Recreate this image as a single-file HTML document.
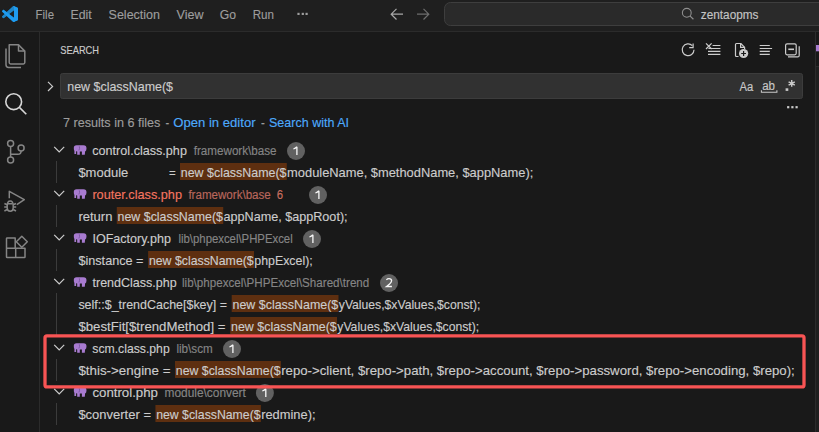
<!DOCTYPE html>
<html><head><meta charset="utf-8"><style>
html,body{margin:0;padding:0;background:#191919;width:819px;height:432px;overflow:hidden}
svg{display:block}
text{font-family:"Liberation Sans", sans-serif;white-space:pre}
</style></head><body>
<svg width="819" height="432" viewBox="0 0 819 432" xml:space="preserve">
<rect x="0" y="0" width="819" height="432" fill="#191919" rx="0" />
<rect x="0" y="0" width="819" height="31" fill="#1f1f1f" rx="0" />
<rect x="0" y="31" width="819" height="1" fill="#2b2b2b" rx="0" />
<rect x="39" y="32" width="1" height="400" fill="#2b2b2b" rx="0" />
<rect x="815" y="32" width="1" height="400" fill="#2b2b2b" rx="0" />
<rect x="816" y="32" width="3" height="400" fill="#1f1f1f" rx="0" />
<rect x="816" y="32" width="3" height="34" fill="#181818" rx="0" />
<rect x="816" y="66" width="3" height="1" fill="#2b2b2b" rx="0" />
<rect x="816" y="45" width="3" height="6.3" fill="#a87bd0" rx="0" />
<g transform="translate(2,6) scale(0.16)">
<path fill="#0065a9" d="M96.5 10.8 75.9 0.9c-2.4-1.2-5.2-.7-7.1 1.2L29.4 38 12.2 25c-1.6-1.2-3.8-1.1-5.3.2L1.4 30.2c-1.8 1.7-1.8 4.5 0 6.2L16.3 50 1.4 63.6c-1.8 1.7-1.8 4.5 0 6.2l5.5 5c1.5 1.3 3.7 1.4 5.3.2L29.4 62l39.4 35.9c1.9 1.9 4.7 2.4 7.1 1.2l20.6-9.9c2.2-1 3.5-3.2 3.5-5.6V16.4c0-2.4-1.4-4.6-3.5-5.6zM75 72.7 45.1 50 75 27.3v45.4z"/>
<path fill="#2489ca" d="M96.5 10.8 75.9.9c-2.4-1.2-5.2-.7-7.1 1.2L1.4 63.6c-1.8 1.7-1.8 4.5 0 6.2l5.5 5c1.5 1.3 3.7 1.4 5.3.2L93.5 13.2c2.7-2.1 6.5-.1 6.5 3.2v-.2c0-2.4-1.4-4.6-3.5-5.4z" opacity="0.9"/>
<path fill="#1f9cf0" d="M75.9 99.1c-2.4 1.2-5.2.7-7.1-1.2L1.4 36.4c-1.8-1.7-1.8-4.5 0-6.2l5.5-5c1.5-1.3 3.7-1.4 5.3-.2l81.3 61.8c2.7 2.1 6.5.1 6.5-3.2v.2c0 2.4-1.4 4.6-3.5 5.6z"/>
<path fill="#1f9cf0" d="M75.9 99.1c-2.4 1.2-5.2.7-7.1-1.2 2.2 2.2 6 .6 6-2.5V4.6c0-3.1-3.8-4.7-6-2.5 1.9-1.9 4.7-2.4 7.1-1.2l20.6 9.9c2.2 1 3.5 3.2 3.5 5.6v67.2c0 2.4-1.4 4.6-3.5 5.6z"/>
</g>
<text x="35.60" y="19" font-size="13.5" fill="#9d9d9d" textLength="18.40" lengthAdjust="spacingAndGlyphs" font-weight="normal" stroke="#9d9d9d" stroke-width="0.15">File</text>
<text x="70.50" y="19" font-size="13.5" fill="#9d9d9d" textLength="21.20" lengthAdjust="spacingAndGlyphs" font-weight="normal" stroke="#9d9d9d" stroke-width="0.15">Edit</text>
<text x="108.60" y="19" font-size="13.5" fill="#9d9d9d" textLength="51.40" lengthAdjust="spacingAndGlyphs" font-weight="normal" stroke="#9d9d9d" stroke-width="0.15">Selection</text>
<text x="176.50" y="19" font-size="13.5" fill="#9d9d9d" textLength="27.00" lengthAdjust="spacingAndGlyphs" font-weight="normal" stroke="#9d9d9d" stroke-width="0.15">View</text>
<text x="219.70" y="19" font-size="13.5" fill="#9d9d9d" textLength="16.30" lengthAdjust="spacingAndGlyphs" font-weight="normal" stroke="#9d9d9d" stroke-width="0.15">Go</text>
<text x="252.70" y="19" font-size="13.5" fill="#9d9d9d" textLength="21.30" lengthAdjust="spacingAndGlyphs" font-weight="normal" stroke="#9d9d9d" stroke-width="0.15">Run</text>
<rect x="297.4" y="12.8" width="2.2" height="2.2" fill="#9d9d9d" rx="0" />
<rect x="301.7" y="12.8" width="2.2" height="2.2" fill="#9d9d9d" rx="0" />
<rect x="305.5" y="12.8" width="2.2" height="2.2" fill="#9d9d9d" rx="0" />
<path d="M403 14.2H391.2M396.5 8.9L391.2 14.2L396.5 19.5" stroke="#a8a8a8" stroke-width="1.2" fill="none"/>
<path d="M417 14.2H428.8M423.5 8.9L428.8 14.2L423.5 19.5" stroke="#6e6e6e" stroke-width="1.2" fill="none"/>
<rect x="444.5" y="2.5" width="400" height="23" rx="6" fill="#2a2a2a" stroke="#3e3e3e" stroke-width="1"/>
<circle cx="686.8" cy="12.8" r="4.4" stroke="#8f8f8f" stroke-width="1.1" fill="none"/><path d="M689.9 15.9L693.4 19.2" stroke="#8f8f8f" stroke-width="1.2"/>
<text x="700.80" y="19" font-size="12.5" fill="#c4c4c4" textLength="57.70" lengthAdjust="spacingAndGlyphs" font-weight="normal" stroke="#c4c4c4" stroke-width="0.15">zentaopms</text>
<g stroke="#858585" stroke-width="1.5" fill="none" stroke-linejoin="round"><path d="M9.2 44.8H18.5L24.8 51.1V62.6Q24.8 64 23.4 64H10.6Q9.2 64 9.2 62.6Z"/><path d="M18.5 44.8V51.1H24.8"/><path d="M6 48.5V64.8Q6 67.5 8.7 67.5H21"/></g>
<g stroke="#d7d7d7" stroke-width="1.6" fill="none"><circle cx="13.7" cy="101.7" r="7.9"/><path d="M19.4 107.4L26.3 114.3"/></g>
<g stroke="#858585" stroke-width="1.5" fill="none"><circle cx="10.6" cy="143.4" r="3"/><circle cx="10.6" cy="160.1" r="3"/><circle cx="21.1" cy="148" r="3"/><path d="M10.6 146.4V157.1"/><path d="M21.1 151Q21.1 154.3 17.8 154.3H10.6"/></g>
<g stroke="#858585" stroke-width="1.5" fill="none" stroke-linejoin="round"><path d="M9.3 198.2V191.3L24.3 199.6L16.8 204.6"/><path d="M7.2 206Q7.2 201 10.2 201Q13.2 201 13.2 206V208Q13.2 211.2 10.2 211.2Q7.2 211.2 7.2 208Z"/><path d="M4.4 203.5L7.2 204.8M16 203.5L13.2 204.8M4.2 207L7.2 207M16.2 207L13.2 207M4.4 211L7.2 209.5M16 211L13.2 209.5M8 203.8H12.4"/></g>
<g stroke="#858585" stroke-width="1.5" fill="none" stroke-linejoin="round"><path d="M6.5 248.3V238.6Q6.5 238 7.1 238H15.2V248.3M6.5 248.3H25V257Q25 257.6 24.4 257.6H7.1Q6.5 257.6 6.5 257Z"/><path d="M15.7 248.3V257.6"/><path d="M21.8 236.2L27.3 241.7L21.8 247.2L16.3 241.7Z"/></g>
<text x="60.30" y="54" font-size="11" fill="#cccccc" textLength="38.70" lengthAdjust="spacingAndGlyphs" font-weight="normal" stroke="#cccccc" stroke-width="0.15">SEARCH</text>
<g stroke="#cccccc" stroke-width="1.2" fill="none"><path d="M692.3 45.6A5.9 5.9 0 1 0 694 49.8"/><path d="M693.1 43.6V47.6H689.2"/></g>
<g stroke="#cccccc" stroke-width="1.2" fill="none"><path d="M706 43.4L711.6 49M711.6 43.4L706 49"/><path d="M712.6 45.5H720.4M708.4 48.5H720.4M708 51.4H720.4M708 54.4H720.4"/></g>
<g stroke="#cccccc" stroke-width="1.2" fill="none" stroke-linejoin="round"><path d="M738.5 56.5H736.4Q735.5 56.5 735.5 55.6V44.4Q735.5 43.5 736.4 43.5H740.8L744.6 47.3V49"/><path d="M740.6 43.6V47.4H744.5"/></g><circle cx="743.6" cy="53.5" r="4.6" fill="#cccccc"/><path d="M743.6 51.1V55.9M741.2 53.5H746" stroke="#191919" stroke-width="1.2"/>
<g stroke="#cccccc" stroke-width="1.1" fill="none"><path d="M759.7 45.5H769.8M759.7 48.5H772.1M759.7 51.4H769.8M759.7 54.4H769.8"/></g>
<g stroke="#cccccc" stroke-width="1.2" fill="none"><rect x="785.6" y="43.8" width="10.6" height="11" rx="1.5"/><path d="M799.2 46.2V55.4Q799.2 56.9 797.7 56.9H788"/></g><path d="M788.3 49.3H794" stroke="#cccccc" stroke-width="1.6"/>
<path d="M48 81.8L52.6 86.4L48 91" stroke="#cccccc" stroke-width="1.2" fill="none"/>
<rect x="60.5" y="73.5" width="742" height="25" fill="#313131" rx="2" stroke="#3c3c3c" stroke-width="1"/>
<text x="67.30" y="90.9" font-size="13.5" fill="#cccccc" textLength="105.70" lengthAdjust="spacingAndGlyphs" font-weight="normal" stroke="#cccccc" stroke-width="0.15">new $className($</text>
<text x="739.50" y="90.8" font-size="12.5" fill="#c8c8c8" textLength="13.70" lengthAdjust="spacingAndGlyphs" font-weight="normal" stroke="#c8c8c8" stroke-width="0.15">Aa</text>
<text x="762.20" y="89.9" font-size="12.5" fill="#c8c8c8" textLength="12.80" lengthAdjust="spacingAndGlyphs" font-weight="normal" stroke="#c8c8c8" stroke-width="0.15">ab</text>
<path d="M761.4 90.2V92.2H776.9V90.2" stroke="#c8c8c8" stroke-width="1.1" fill="none"/>
<rect x="785.6" y="88.3" width="2.7" height="2.6" fill="#c8c8c8" rx="0" />
<g stroke="#c8c8c8" stroke-width="1.5"><path d="M791.7 80.1V86.8M788.6 81.8L794.8 85.1M794.8 81.8L788.6 85.1"/></g><circle cx="791.7" cy="83.45" r="1.6" fill="#c8c8c8"/>
<rect x="787.1" y="106.1" width="2.2" height="2.2" fill="#cccccc" rx="0" />
<rect x="791.3" y="106.1" width="2.2" height="2.2" fill="#cccccc" rx="0" />
<rect x="795.5" y="106.1" width="2.2" height="2.2" fill="#cccccc" rx="0" />
<text x="63.00" y="126.5" font-size="13.5" fill="#9d9d9d" textLength="97.40" lengthAdjust="spacingAndGlyphs" font-weight="normal" stroke="#9d9d9d" stroke-width="0.15">7 results in 6 files</text>
<text x="165.50" y="126.5" font-size="13.5" fill="#9d9d9d" textLength="3.70" lengthAdjust="spacingAndGlyphs" font-weight="normal" stroke="#9d9d9d" stroke-width="0.15">-</text>
<text x="173.20" y="126.5" font-size="13.5" fill="#4daafc" textLength="82.40" lengthAdjust="spacingAndGlyphs" font-weight="normal" stroke="#4daafc" stroke-width="0.15">Open in editor</text>
<text x="261.00" y="126.5" font-size="13.5" fill="#9d9d9d" textLength="3.80" lengthAdjust="spacingAndGlyphs" font-weight="normal" stroke="#9d9d9d" stroke-width="0.15">-</text>
<text x="269.00" y="126.5" font-size="13.5" fill="#4daafc" textLength="80.00" lengthAdjust="spacingAndGlyphs" font-weight="normal" stroke="#4daafc" stroke-width="0.15">Search with AI</text>
<path d="M54.2 146.8L59.2 152L64.2 146.8" stroke="#cccccc" stroke-width="1.2" fill="none"/>
<g transform="translate(73.5,145.1)"><path fill="#a87bd0" d="M0.3 3Q0.3 0.3 3 0.2L10 0.2Q13 0.3 13 3.3Q13 5.6 11.6 6.3L11.3 9.7L8.4 9.7L8.4 6.5L6.3 6.5L6.3 9.7L3.7 9.7L3.7 6.5L2.6 6.2L2.6 9L0.9 9L0.9 6Q0.3 5 0.3 3Z"/><path d="M5.8 1.2Q6.6 3.2 5.4 5.4" stroke="#74519a" stroke-width="0.8" fill="none"/></g>
<text x="92.30" y="155" font-size="13.5" fill="#cccccc" textLength="94.60" lengthAdjust="spacingAndGlyphs" font-weight="normal" stroke="#cccccc" stroke-width="0.15">control.class.php</text>
<text x="193.70" y="155" font-size="12" fill="#858585" textLength="82.90" lengthAdjust="spacingAndGlyphs" font-weight="normal" stroke="#858585" stroke-width="0.15">framework\base</text>
<circle cx="296" cy="151" r="9" fill="#616161"/>
<path d="M296.9 146.8V155M296.9 146.8Q295.4 148.4 293.4 149" stroke="#f8f8f8" stroke-width="1.3" fill="none"/>
<path d="M54.2 190.8L59.2 196L64.2 190.8" stroke="#cccccc" stroke-width="1.2" fill="none"/>
<g transform="translate(73.5,189.1)"><path fill="#a87bd0" d="M0.3 3Q0.3 0.3 3 0.2L10 0.2Q13 0.3 13 3.3Q13 5.6 11.6 6.3L11.3 9.7L8.4 9.7L8.4 6.5L6.3 6.5L6.3 9.7L3.7 9.7L3.7 6.5L2.6 6.2L2.6 9L0.9 9L0.9 6Q0.3 5 0.3 3Z"/><path d="M5.8 1.2Q6.6 3.2 5.4 5.4" stroke="#74519a" stroke-width="0.8" fill="none"/></g>
<text x="92.40" y="199" font-size="13.5" fill="#f47560" textLength="89.60" lengthAdjust="spacingAndGlyphs" font-weight="normal" stroke="#f47560" stroke-width="0.15">router.class.php</text>
<text x="188.40" y="199" font-size="12" fill="#b9675c" textLength="82.40" lengthAdjust="spacingAndGlyphs" font-weight="normal" stroke="#b9675c" stroke-width="0.15">framework\base</text>
<circle cx="318" cy="195" r="9" fill="#616161"/>
<path d="M318.9 190.8V199M318.9 190.8Q317.4 192.4 315.4 193" stroke="#f8f8f8" stroke-width="1.3" fill="none"/>
<path d="M54.2 234.8L59.2 240L64.2 234.8" stroke="#cccccc" stroke-width="1.2" fill="none"/>
<g transform="translate(73.5,233.1)"><path fill="#a87bd0" d="M0.3 3Q0.3 0.3 3 0.2L10 0.2Q13 0.3 13 3.3Q13 5.6 11.6 6.3L11.3 9.7L8.4 9.7L8.4 6.5L6.3 6.5L6.3 9.7L3.7 9.7L3.7 6.5L2.6 6.2L2.6 9L0.9 9L0.9 6Q0.3 5 0.3 3Z"/><path d="M5.8 1.2Q6.6 3.2 5.4 5.4" stroke="#74519a" stroke-width="0.8" fill="none"/></g>
<text x="92.40" y="243" font-size="13.5" fill="#cccccc" textLength="78.60" lengthAdjust="spacingAndGlyphs" font-weight="normal" stroke="#cccccc" stroke-width="0.15">IOFactory.php</text>
<text x="178.50" y="243" font-size="12" fill="#858585" textLength="114.20" lengthAdjust="spacingAndGlyphs" font-weight="normal" stroke="#858585" stroke-width="0.15">lib\phpexcel\PHPExcel</text>
<circle cx="312" cy="239" r="9" fill="#616161"/>
<path d="M312.9 234.8V243M312.9 234.8Q311.4 236.4 309.4 237" stroke="#f8f8f8" stroke-width="1.3" fill="none"/>
<path d="M54.2 278.8L59.2 284L64.2 278.8" stroke="#cccccc" stroke-width="1.2" fill="none"/>
<g transform="translate(73.5,277.1)"><path fill="#a87bd0" d="M0.3 3Q0.3 0.3 3 0.2L10 0.2Q13 0.3 13 3.3Q13 5.6 11.6 6.3L11.3 9.7L8.4 9.7L8.4 6.5L6.3 6.5L6.3 9.7L3.7 9.7L3.7 6.5L2.6 6.2L2.6 9L0.9 9L0.9 6Q0.3 5 0.3 3Z"/><path d="M5.8 1.2Q6.6 3.2 5.4 5.4" stroke="#74519a" stroke-width="0.8" fill="none"/></g>
<text x="92.50" y="287" font-size="13.5" fill="#cccccc" textLength="84.20" lengthAdjust="spacingAndGlyphs" font-weight="normal" stroke="#cccccc" stroke-width="0.15">trendClass.php</text>
<text x="182.00" y="287" font-size="12" fill="#858585" textLength="187.30" lengthAdjust="spacingAndGlyphs" font-weight="normal" stroke="#858585" stroke-width="0.15">lib\phpexcel\PHPExcel\Shared\trend</text>
<circle cx="389" cy="283" r="9" fill="#616161"/>
<path d="M386.4 279.8Q387.4 278.6 389 278.6Q391.6 278.6 391.6 280.8Q391.6 282.4 389.6 283.9L386.4 286.5H391.9" stroke="#f8f8f8" stroke-width="1.3" fill="none"/>
<path d="M54.2 344.8L59.2 350L64.2 344.8" stroke="#cccccc" stroke-width="1.2" fill="none"/>
<g transform="translate(73.5,343.1)"><path fill="#a87bd0" d="M0.3 3Q0.3 0.3 3 0.2L10 0.2Q13 0.3 13 3.3Q13 5.6 11.6 6.3L11.3 9.7L8.4 9.7L8.4 6.5L6.3 6.5L6.3 9.7L3.7 9.7L3.7 6.5L2.6 6.2L2.6 9L0.9 9L0.9 6Q0.3 5 0.3 3Z"/><path d="M5.8 1.2Q6.6 3.2 5.4 5.4" stroke="#74519a" stroke-width="0.8" fill="none"/></g>
<text x="92.30" y="353" font-size="13.5" fill="#cccccc" textLength="77.40" lengthAdjust="spacingAndGlyphs" font-weight="normal" stroke="#cccccc" stroke-width="0.15">scm.class.php</text>
<text x="176.40" y="353" font-size="12" fill="#858585" textLength="36.30" lengthAdjust="spacingAndGlyphs" font-weight="normal" stroke="#858585" stroke-width="0.15">lib\scm</text>
<circle cx="232" cy="349" r="9" fill="#616161"/>
<path d="M232.9 344.8V353M232.9 344.8Q231.4 346.4 229.4 347" stroke="#f8f8f8" stroke-width="1.3" fill="none"/>
<path d="M54.2 388.8L59.2 394L64.2 388.8" stroke="#cccccc" stroke-width="1.2" fill="none"/>
<g transform="translate(73.5,387.1)"><path fill="#a87bd0" d="M0.3 3Q0.3 0.3 3 0.2L10 0.2Q13 0.3 13 3.3Q13 5.6 11.6 6.3L11.3 9.7L8.4 9.7L8.4 6.5L6.3 6.5L6.3 9.7L3.7 9.7L3.7 6.5L2.6 6.2L2.6 9L0.9 9L0.9 6Q0.3 5 0.3 3Z"/><path d="M5.8 1.2Q6.6 3.2 5.4 5.4" stroke="#74519a" stroke-width="0.8" fill="none"/></g>
<text x="92.40" y="397" font-size="13.5" fill="#cccccc" textLength="65.60" lengthAdjust="spacingAndGlyphs" font-weight="normal" stroke="#cccccc" stroke-width="0.15">control.php</text>
<text x="164.50" y="397" font-size="12" fill="#858585" textLength="81.40" lengthAdjust="spacingAndGlyphs" font-weight="normal" stroke="#858585" stroke-width="0.15">module\convert</text>
<circle cx="264.9" cy="393" r="9" fill="#616161"/>
<path d="M265.79999999999995 388.8V397M265.79999999999995 388.8Q264.29999999999995 390.4 262.29999999999995 391" stroke="#f8f8f8" stroke-width="1.3" fill="none"/>
<text x="276.70" y="199" font-size="12.5" fill="#c96f60" textLength="6.30" lengthAdjust="spacingAndGlyphs" font-weight="normal" stroke="#c96f60" stroke-width="0.15">6</text>
<rect x="56" y="161" width="1" height="22" fill="#3b3b3b" rx="0" />
<rect x="180" y="163" width="106.80000000000001" height="17" fill="#5e2f10" rx="0" />
<text x="78.40" y="177" font-size="13.5" fill="#cccccc" textLength="49.90" lengthAdjust="spacingAndGlyphs" font-weight="normal" stroke="#cccccc" stroke-width="0.15">$module</text>
<text x="180.80" y="177" font-size="13.5" fill="#cccccc" textLength="105.70" lengthAdjust="spacingAndGlyphs" font-weight="normal" stroke="#cccccc" stroke-width="0.15">new $className($</text>
<text x="287.10" y="177" font-size="13.5" fill="#cccccc" textLength="246.20" lengthAdjust="spacingAndGlyphs" font-weight="normal" stroke="#cccccc" stroke-width="0.15">moduleName, $methodName, $appName);</text>
<rect x="56" y="205" width="1" height="22" fill="#3b3b3b" rx="0" />
<rect x="116.8" y="207" width="106.39999999999999" height="17" fill="#5e2f10" rx="0" />
<text x="78.40" y="221" font-size="13.5" fill="#cccccc" textLength="34.10" lengthAdjust="spacingAndGlyphs" font-weight="normal" stroke="#cccccc" stroke-width="0.15">return</text>
<text x="117.60" y="221" font-size="13.5" fill="#cccccc" textLength="105.30" lengthAdjust="spacingAndGlyphs" font-weight="normal" stroke="#cccccc" stroke-width="0.15">new $className($</text>
<text x="223.50" y="221" font-size="13.5" fill="#cccccc" textLength="124.10" lengthAdjust="spacingAndGlyphs" font-weight="normal" stroke="#cccccc" stroke-width="0.15">appName, $appRoot);</text>
<rect x="56" y="249" width="1" height="22" fill="#3b3b3b" rx="0" />
<rect x="148.1" y="251" width="105.9" height="17" fill="#5e2f10" rx="0" />
<text x="78.40" y="265" font-size="13.5" fill="#cccccc" textLength="65.10" lengthAdjust="spacingAndGlyphs" font-weight="normal" stroke="#cccccc" stroke-width="0.15">$instance =</text>
<text x="148.90" y="265" font-size="13.5" fill="#cccccc" textLength="104.80" lengthAdjust="spacingAndGlyphs" font-weight="normal" stroke="#cccccc" stroke-width="0.15">new $className($</text>
<text x="254.30" y="265" font-size="13.5" fill="#cccccc" textLength="58.40" lengthAdjust="spacingAndGlyphs" font-weight="normal" stroke="#cccccc" stroke-width="0.15">phpExcel);</text>
<rect x="56" y="293" width="1" height="22" fill="#3b3b3b" rx="0" />
<rect x="231.7" y="295" width="106.80000000000001" height="17" fill="#5e2f10" rx="0" />
<text x="78.40" y="309" font-size="13.5" fill="#cccccc" textLength="148.60" lengthAdjust="spacingAndGlyphs" font-weight="normal" stroke="#cccccc" stroke-width="0.15">self::$_trendCache[$key] =</text>
<text x="232.50" y="309" font-size="13.5" fill="#cccccc" textLength="105.70" lengthAdjust="spacingAndGlyphs" font-weight="normal" stroke="#cccccc" stroke-width="0.15">new $className($</text>
<text x="338.80" y="309" font-size="13.5" fill="#cccccc" textLength="141.60" lengthAdjust="spacingAndGlyphs" font-weight="normal" stroke="#cccccc" stroke-width="0.15">yValues,$xValues,$const);</text>
<rect x="56" y="315" width="1" height="22" fill="#3b3b3b" rx="0" />
<rect x="230.2" y="317" width="106.80000000000001" height="17" fill="#5e2f10" rx="0" />
<text x="78.40" y="331" font-size="13.5" fill="#cccccc" textLength="147.10" lengthAdjust="spacingAndGlyphs" font-weight="normal" stroke="#cccccc" stroke-width="0.15">$bestFit[$trendMethod] =</text>
<text x="231.00" y="331" font-size="13.5" fill="#cccccc" textLength="105.70" lengthAdjust="spacingAndGlyphs" font-weight="normal" stroke="#cccccc" stroke-width="0.15">new $className($</text>
<text x="337.30" y="331" font-size="13.5" fill="#cccccc" textLength="141.90" lengthAdjust="spacingAndGlyphs" font-weight="normal" stroke="#cccccc" stroke-width="0.15">yValues,$xValues,$const);</text>
<rect x="56" y="359" width="1" height="22" fill="#3b3b3b" rx="0" />
<rect x="175" y="361" width="105.89999999999998" height="17" fill="#5e2f10" rx="0" />
<text x="78.40" y="375" font-size="13.5" fill="#cccccc" textLength="92.10" lengthAdjust="spacingAndGlyphs" font-weight="normal" stroke="#cccccc" stroke-width="0.15">$this-&gt;engine =</text>
<text x="175.80" y="375" font-size="13.5" fill="#cccccc" textLength="104.80" lengthAdjust="spacingAndGlyphs" font-weight="normal" stroke="#cccccc" stroke-width="0.15">new $className($</text>
<text x="281.20" y="375" font-size="13.5" fill="#cccccc" textLength="513.60" lengthAdjust="spacingAndGlyphs" font-weight="normal" stroke="#cccccc" stroke-width="0.15">repo-&gt;client, $repo-&gt;path, $repo-&gt;account, $repo-&gt;password, $repo-&gt;encoding, $repo);</text>
<rect x="56" y="403" width="1" height="22" fill="#3b3b3b" rx="0" />
<rect x="155.4" y="405" width="105.49999999999997" height="17" fill="#5e2f10" rx="0" />
<text x="78.40" y="419" font-size="13.5" fill="#cccccc" textLength="72.60" lengthAdjust="spacingAndGlyphs" font-weight="normal" stroke="#cccccc" stroke-width="0.15">$converter =</text>
<text x="156.20" y="419" font-size="13.5" fill="#cccccc" textLength="104.40" lengthAdjust="spacingAndGlyphs" font-weight="normal" stroke="#cccccc" stroke-width="0.15">new $className($</text>
<text x="261.20" y="419" font-size="13.5" fill="#cccccc" textLength="54.30" lengthAdjust="spacingAndGlyphs" font-weight="normal" stroke="#cccccc" stroke-width="0.15">redmine);</text>
<text x="169.00" y="177" font-size="13.5" fill="#cccccc" textLength="6.70" lengthAdjust="spacingAndGlyphs" font-weight="normal" stroke="#cccccc" stroke-width="0.15">=</text>
<rect x="45.0" y="335.8" width="759.0" height="51.1" rx="2" fill="none" stroke="#f85454" stroke-width="3.3"/>
</svg>
</body></html>
